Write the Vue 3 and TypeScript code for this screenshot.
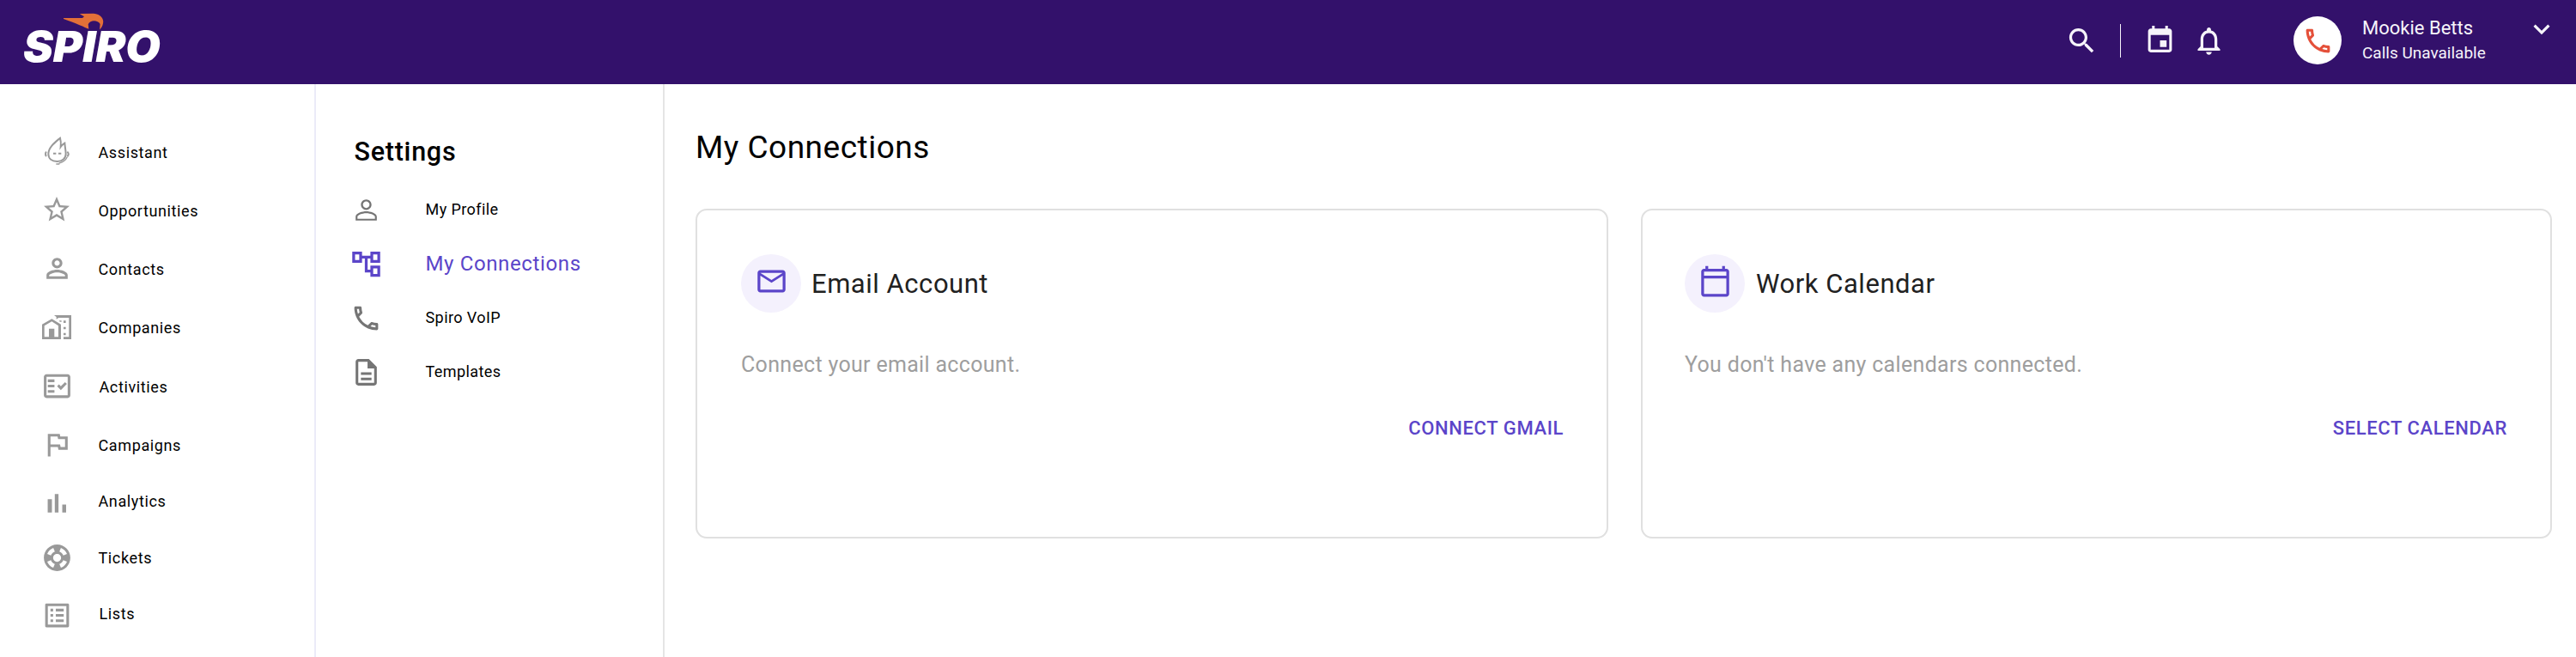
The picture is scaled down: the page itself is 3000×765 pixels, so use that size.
<script setup lang="ts">
interface NavItem {
  label: string
  icon: string
}

interface ConnectionCard {
  key: string
  title: string
  description: string
  action: string
  icon: string
}

const icons: Record<string, string> = {
  search:
    'M15.5 14h-.79l-.28-.27C15.41 12.59 16 11.11 16 9.5 16 5.91 13.09 3 9.5 3S3 5.91 3 9.5 5.91 16 9.5 16c1.61 0 3.09-.59 4.23-1.57l.27.28v.79l5 4.99L20.49 19l-4.99-5zm-6 0C7.01 14 5 11.99 5 9.5S7.01 5 9.5 5 14 7.01 14 9.5 11.99 14 9.5 14z',
  event:
    'M17 12h-5v5h5v-5zM16 1v2H8V1H6v2H5c-1.11 0-1.99.9-1.99 2L3 19c0 1.1.89 2 2 2h14c1.1 0 2-.9 2-2V5c0-1.1-.9-2-2-2h-1V1h-2zm3 18H5V8h14v11z',
  bell:
    'M12 22c1.1 0 2-.9 2-2h-4c0 1.1.9 2 2 2zm6-6v-5c0-3.07-1.63-5.64-4.5-6.32V4c0-.83-.67-1.5-1.5-1.5s-1.5.67-1.5 1.5v.68C7.64 5.36 6 7.92 6 11v5l-2 2v1h16v-1l-2-2zm-2 1H8v-6c0-2.48 1.51-4.5 4-4.5s4 2.02 4 4.5v6z',
  phone:
    'M6.54 5c.06.89.21 1.76.45 2.59l-1.2 1.2c-.41-1.2-.67-2.47-.76-3.79h1.51m9.86 12.02c.85.24 1.72.39 2.6.45v1.49c-1.32-.09-2.59-.35-3.8-.75l1.2-1.19M7.5 3H4c-.55 0-1 .45-1 1 0 9.39 7.61 17 17 17 .55 0 1-.45 1-1v-3.49c0-.55-.45-1-1-1-1.24 0-2.45-.2-3.57-.57-.1-.04-.21-.05-.31-.05-.26 0-.51.1-.71.29l-2.2 2.2c-2.83-1.45-5.15-3.76-6.59-6.59l2.2-2.2c.28-.28.36-.67.25-1.02C8.7 6.45 8.5 5.25 8.5 4c0-.55-.45-1-1-1z',
  chevron: 'M7.41 8.59 12 13.17l4.59-4.58L18 10l-6 6-6-6 1.41-1.41z',
  star:
    'm22 9.24-7.19-.62L12 2 9.19 8.63 2 9.24l5.46 4.73L5.82 21 12 17.27 18.18 21l-1.63-7.03L22 9.24zM12 15.4l-3.76 2.27 1-4.28-3.32-2.88 4.38-.38L12 6.1l1.71 4.04 4.38.38-3.32 2.88 1 4.28L12 15.4z',
  contact:
    'M12 6c1.1 0 2 .9 2 2s-.9 2-2 2-2-.9-2-2 .9-2 2-2m0 9c2.7 0 5.8 1.29 6 2v1H6v-.99c.2-.72 3.3-2.01 6-2.01m0-11C9.79 4 8 5.79 8 8s1.79 4 4 4 4-1.79 4-4-1.79-4-4-4zm0 9c-2.67 0-8 1.34-8 4v3h16v-3c0-2.66-5.33-4-8-4z',
  activities:
    'M20 3H4c-1.1 0-2 .9-2 2v14c0 1.1.9 2 2 2h16c1.1 0 2-.9 2-2V5c0-1.1-.9-2-2-2zm0 16H4V5h16v14zM19.41 10.42 17.99 9l-3.17 3.17-1.41-1.42L12 12.16 14.82 15zM10 7H5v2h5V7zm0 4H5v2h5v-2zm0 4H5v2h5v-2z',
  flag: 'm12.36 6 .4 2H18v6h-3.36l-.4-2H7V6h5.36M14 4H5v17h2v-7h5.6l.4 2h7V6h-5.6L14 4z',
  bars: 'M4.9 11.2h3.2v10.1H4.9zM10.25 7.3h2.8v14h-2.8zM15.9 15.2h2.9v6.1h-2.9z',
  support:
    'M12 2C6.48 2 2 6.48 2 12s4.48 10 10 10 10-4.48 10-10S17.52 2 12 2zm7.46 7.12-2.78 1.15c-.51-1.36-1.58-2.44-2.95-2.94l1.15-2.78c2.1.8 3.77 2.47 4.58 4.57zM12 15c-1.66 0-3-1.34-3-3s1.34-3 3-3 3 1.34 3 3-1.34 3-3 3zM9.13 4.54l1.17 2.78c-1.38.5-2.47 1.59-2.98 2.97L4.54 9.13c.81-2.11 2.48-3.78 4.59-4.59zM4.54 14.87l2.78-1.15c.51 1.38 1.59 2.46 2.97 2.96l-1.17 2.78c-2.1-.81-3.77-2.48-4.58-4.59zm10.34 4.59-1.15-2.78c1.37-.51 2.45-1.59 2.95-2.97l2.78 1.17c-.81 2.1-2.48 3.77-4.58 4.58z',
  list:
    'M19 5v14H5V5h14m1.1-2H3.9c-.5 0-.9.4-.9.9v16.2c0 .4.4.9.9.9h16.2c.4 0 .9-.5.9-.9V3.9c0-.5-.5-.9-.9-.9zM11 7h6v2h-6V7zm0 4h6v2h-6v-2zm0 4h6v2h-6zM7 7h2v2H7zm0 4h2v2H7zm0 4h2v2H7z',
  profile:
    'M12 5.5c1.38 0 2.5 1.12 2.5 2.5s-1.12 2.5-2.5 2.5S9.5 9.38 9.5 8s1.12-2.5 2.5-2.5M12 14.4c3.1 0 6.6 1.5 6.6 2.6v1.6H5.4V17c0-1.1 3.5-2.6 6.6-2.6M12 4C9.79 4 8 5.79 8 8s1.79 4 4 4 4-1.79 4-4-1.79-4-4-4zm0 9c-2.67 0-8 1.34-8 4v3h16v-3c0-2.66-5.33-4-8-4z',
  tree:
    'M22 11V3h-7v3H9V3H2v8h7V8h2v10h4v3h7v-8h-7v3h-2V8h2v3h7zM7 9H4V5h3v4zm10 6h3v4h-3v-4zm0-10h3v4h-3V5z',
  document:
    'M14 2H6c-1.1 0-2 .9-2 2v16c0 1.1.9 2 2 2h12c1.1 0 2-.9 2-2V8l-6-6zM6 20V4h7v5h5v11H6zM8 16h8v2H8zM8 12h8v2H8z',
  mail:
    'M22 6c0-1.1-.9-2-2-2H4c-1.1 0-2 .9-2 2v12c0 1.1.9 2 2 2h16c1.1 0 2-.9 2-2V6zm-2 0-8 5-8-5h16zm0 12H4V8l8 5 8-5v10z',
  calendar:
    'M20 3h-1V1h-2v2H7V1H5v2H4c-1.1 0-2 .9-2 2v16c0 1.1.9 2 2 2h16c1.1 0 2-.9 2-2V5c0-1.1-.9-2-2-2zm0 18H4V10h16v11zm0-13H4V5h16v3z',
}

const mainNav: NavItem[] = [
  { label: 'Assistant', icon: 'assistant' },
  { label: 'Opportunities', icon: 'star' },
  { label: 'Contacts', icon: 'contact' },
  { label: 'Companies', icon: 'companies' },
  { label: 'Activities', icon: 'activities' },
  { label: 'Campaigns', icon: 'flag' },
  { label: 'Analytics', icon: 'bars' },
  { label: 'Tickets', icon: 'support' },
  { label: 'Lists', icon: 'list' },
]

const settingsNav: NavItem[] = [
  { label: 'My Profile', icon: 'profile' },
  { label: 'My Connections', icon: 'tree' },
  { label: 'Spiro VoIP', icon: 'phone' },
  { label: 'Templates', icon: 'document' },
]
const activeSetting = 'My Connections'

const cards: ConnectionCard[] = [
  {
    key: 'email',
    title: 'Email Account',
    description: 'Connect your email account.',
    action: 'CONNECT GMAIL',
    icon: 'mail',
  },
  {
    key: 'work',
    title: 'Work Calendar',
    description: "You don't have any calendars connected.",
    action: 'SELECT CALENDAR',
    icon: 'calendar',
  },
]
</script>

<template>
  <div class="app">
    <header class="topbar">
      <svg class="logo" viewBox="0 0 200 98" role="img" aria-label="Spiro">
        <text class="logo-text" x="27" y="72.4" textLength="160" lengthAdjust="spacingAndGlyphs">SPIRO</text>
        <path
          class="logo-flame"
          d="M74 21L96 21L98 19.3L92.7 16L109 15.7C117 16.3 121.5 22 120 27.3C119.5 30.5 117.8 32.8 116 34.5L116.6 28C114 23.2 105 22.8 102.7 28.3L103.3 33.7C99 32 89 27.2 74 22Z"
        />
      </svg>
      <div class="tools">
        <svg class="tool search" viewBox="0 0 24 24"><path :d="icons.search" /></svg>
        <span class="divider"></span>
        <svg class="tool event" viewBox="0 0 24 24"><path :d="icons.event" /></svg>
        <svg class="tool bell" viewBox="0 0 24 24"><path :d="icons.bell" /></svg>
        <div class="call-status">
          <svg viewBox="0 0 24 24"><path :d="icons.phone" /></svg>
        </div>
        <div class="user">
          <span class="user-name">Mookie Betts</span>
          <span class="user-state">Calls Unavailable</span>
        </div>
        <svg class="tool chevron" viewBox="0 0 24 24"><path :d="icons.chevron" /></svg>
      </div>
    </header>

    <div class="body">
      <nav class="main-nav">
        <a v-for="item in mainNav" :key="item.label" :class="['nav-item', item.icon]">
          <span class="nav-icon">
            <svg v-if="item.icon === 'assistant'" viewBox="0 0 132 132">
              <g class="line">
                <path d="M78 20C62 34 37 52 37 76C37 93 50 102 68 102C86 102 98 91 98 76C98 64 95 52 94 38C89 41 85 44 80 51C81 41 81 30 78 20Z" />
                <path d="M54 74H64M72 74H82" />
                <path d="M30 68C26 72 26 80 30 84M103 68C108 73 108 80 103 85" />
                <path class="thin" d="M103 86C98 97 88 104 74 108M64 111H76" />
              </g>
            </svg>
            <svg v-else-if="item.icon === 'companies'" viewBox="0 0 103 84">
              <path d="M42 0H103V84H75V76H94V9H58L50 14V6ZM75 19H83V27H75ZM75 41H83V49H75ZM75 62H83V70H75ZM60 19H68V23H62Z" />
              <path fill-rule="evenodd" d="M34 13L66 32V84H0V32ZM34 22L8 37V76H24V47H43V76H57V37Z" />
            </svg>
            <svg v-else viewBox="0 0 24 24"><path :d="icons[item.icon]" /></svg>
          </span>
          <span>{{ item.label }}</span>
        </a>
      </nav>

      <aside class="settings">
        <h2>Settings</h2>
        <a
          v-for="item in settingsNav"
          :key="item.label"
          :class="['setting', item.icon, { active: item.label === activeSetting }]"
        >
          <span class="setting-icon">
            <svg viewBox="0 0 24 24"><path :d="icons[item.icon]" /></svg>
          </span>
          <span>{{ item.label }}</span>
        </a>
      </aside>

      <main class="content">
        <h1>My Connections</h1>
        <div class="cards">
          <section v-for="card in cards" :key="card.key" :class="['card', card.key]">
            <div class="card-head">
              <span class="badge">
                <svg viewBox="0 0 24 24"><path :d="icons[card.icon]" /></svg>
              </span>
              <h3>{{ card.title }}</h3>
            </div>
            <p>{{ card.description }}</p>
            <button type="button">{{ card.action }}</button>
          </section>
        </div>
      </main>
    </div>
  </div>
</template>

<style>
body {
  margin: 0;
  background: #fff;
}
</style>

<style scoped>
.app {
  width: 3000px;
  height: 765px;
  display: flex;
  flex-direction: column;
  overflow: hidden;
  background: #fff;
  color: #000;
  font-family: Roboto, 'Liberation Sans', sans-serif;
}
svg {
  display: block;
  flex: none;
  fill: currentColor;
}
h1,
h2,
h3,
p {
  margin: 0;
}

.topbar {
  flex: none;
  height: 98px;
  display: flex;
  justify-content: space-between;
  background: #33116b;
  color: #f6f4fa;
}
.logo {
  width: 200px;
  height: 98px;
}
.logo-text {
  font: italic 900 49.5px Inter, 'Open Sans', sans-serif;
  fill: #fff;
}
.logo-flame {
  fill: #e37038;
}
.tools {
  height: 94px;
  display: flex;
  align-items: center;
  padding-right: 21px;
}
.tool {
  width: 39px;
  height: 39px;
}
.divider {
  width: 1px;
  height: 39px;
  margin: 1px 27px 0 25px;
  background: #f6f4fa;
}
.tool.event {
  width: 37px;
  height: 38px;
}
.tool.bell {
  margin: 0 79px 0 19px;
}
.call-status {
  width: 56px;
  height: 56px;
  display: flex;
  align-items: center;
  justify-content: center;
  border-radius: 50%;
  background: #fff;
  color: #e4503a;
}
.call-status svg {
  width: 37px;
  height: 37px;
}
.user {
  width: 170px;
  margin-left: 24px;
  display: flex;
  flex-direction: column;
  line-height: 29px;
  white-space: nowrap;
}
.user-name {
  font-size: 22px;
}
.user-state {
  font-size: 19px;
}
.tool.chevron {
  width: 38px;
  height: 38px;
  margin: 0 0 27px 20px;
}

.body {
  flex: 1;
  display: flex;
  min-height: 0;
}
.main-nav {
  box-sizing: border-box;
  width: 368px;
  padding: 45px 0 0 46px;
  display: grid;
  grid-template-rows: 68px 68px 68px 69px 68px 68px 62px 70px 60px;
  align-content: start;
  border-right: 2px solid #ebebf8;
  font-size: 18px;
  letter-spacing: 0.62px;
}
.nav-item {
  display: flex;
  align-items: center;
  gap: 28.5px;
}
.nav-icon {
  width: 40px;
  margin-bottom: 2px;
  display: flex;
  justify-content: center;
  color: #999;
}
.nav-icon svg {
  width: 37px;
  height: 37px;
}
.assistant .nav-icon svg {
  width: 44px;
  height: 44px;
}
.star .nav-icon svg {
  width: 36px;
  height: 36px;
}
.companies .nav-icon svg {
  width: 34.3px;
  height: 28px;
}
.support .nav-icon {
  margin-bottom: 0;
}
.activities,
.list {
  gap: 29.5px;
}
.list .nav-icon {
  margin: 5px 0 0;
}
.line {
  fill: none;
  stroke: currentColor;
  stroke-width: 6;
}
.thin {
  stroke-width: 4;
}

.settings {
  box-sizing: border-box;
  width: 406px;
  padding: 61px 0 0 38px;
  border-right: 2px solid #e5e5e5;
}
.settings h2 {
  height: 53px;
  padding-left: 6.5px;
  font-size: 30.5px;
  line-height: 36px;
  font-weight: 500;
  letter-spacing: 0.75px;
}
.setting {
  height: 63px;
  display: flex;
  align-items: center;
  gap: 49.5px;
  font-size: 18px;
  letter-spacing: 0.42px;
}
.setting-icon {
  width: 40px;
  margin-top: 2px;
  display: flex;
  justify-content: center;
  color: #757575;
}
.setting-icon svg {
  width: 37px;
  height: 39px;
}
.setting.active {
  font-size: 24px;
  letter-spacing: 0.63px;
  color: #5b45c9;
}
.setting.active .setting-icon {
  color: inherit;
}
.setting.active svg {
  width: 39px;
}

.content {
  flex: 1;
  padding: 49px 28px 0 36px;
}
.content h1 {
  height: 96px;
  font-size: 37px;
  line-height: 50px;
  font-weight: 400;
  letter-spacing: 0.5px;
}
.cards {
  display: grid;
  grid-template-columns: 1063fr 1061fr;
  gap: 38px;
}
.card {
  box-sizing: border-box;
  height: 384px;
  padding: 51px 50px 0 51px;
  display: flex;
  flex-direction: column;
  border: 2px solid #e0e0e0;
  border-radius: 13px;
}
.card.work {
  padding-left: 49px;
}
.card-head {
  display: flex;
  align-items: center;
  gap: 12px;
}
.work .card-head {
  gap: 13px;
}
.badge {
  box-sizing: border-box;
  width: 70px;
  height: 68px;
  padding-bottom: 6px;
  display: flex;
  align-items: center;
  justify-content: center;
  border-radius: 50%;
  background: #f4f1fd;
  color: #5b45c9;
}
.badge svg {
  width: 39px;
  height: 39px;
}
.card h3 {
  margin-top: 2px;
  font-size: 31px;
  line-height: 40px;
  font-weight: 400;
  letter-spacing: 0.53px;
  color: #212121;
}
.card p {
  margin-top: 46px;
  font-size: 25px;
  line-height: 30px;
  letter-spacing: 0.32px;
  color: #9e9e9e;
}
.card button {
  align-self: flex-end;
  margin-top: 44px;
  padding: 0;
  border: 0;
  background: none;
  font: 500 22px/30px Roboto, 'Liberation Sans', sans-serif;
  letter-spacing: 0.62px;
  color: #5b45c9;
}
</style>
